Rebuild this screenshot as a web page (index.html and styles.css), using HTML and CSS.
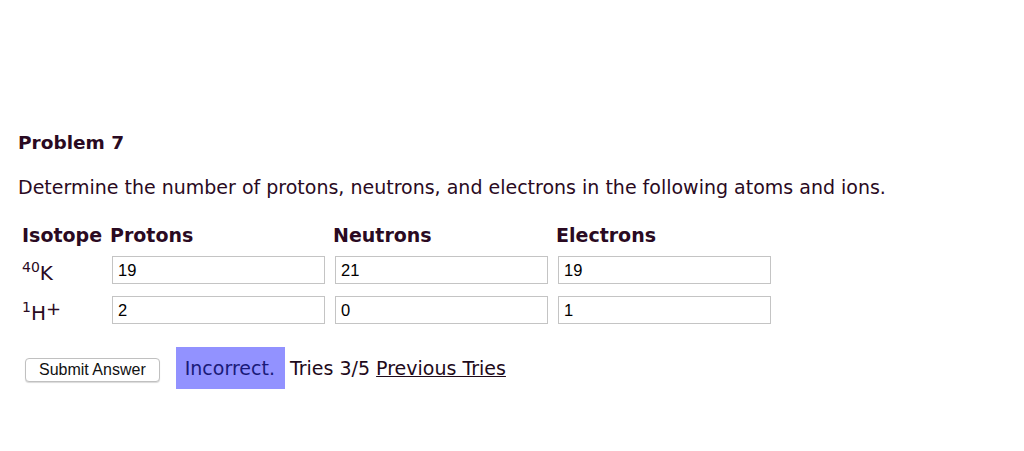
FILE: index.html
```html
<!DOCTYPE html>
<html lang="en">
<head>
    <meta charset="UTF-8">
    <title>Problem 7</title>
    <link rel="stylesheet" href="styles.css">
</head>
<body>
    <div class="problem">
        <h2>Problem 7</h2>
        <p class="question">Determine the number of protons, neutrons, and electrons in the following atoms and ions.</p>

        <div class="answer-grid">
            <div class="head">Isotope</div>
            <div class="head">Protons</div>
            <div class="head">Neutrons</div>
            <div class="head">Electrons</div>

            <div class="isotope"><sup>40</sup>K</div>
            <input type="text" value="19">
            <input type="text" value="21">
            <input type="text" value="19">

            <div class="isotope"><sup>1</sup>H<sup class="charge">+</sup></div>
            <input type="text" value="2">
            <input type="text" value="0">
            <input type="text" value="1">
        </div>

        <div class="submit-row">
            <button>Submit Answer</button>
            <span class="feedback">Incorrect.</span>
            <span class="tries">Tries 3/5 <a href="#">Previous Tries</a></span>
        </div>
    </div>
</body>
</html>
```

FILE: styles.css
```css
body {
    margin: 0;
    background: #ffffff;
    color: #2a0a22;
    font-family: "DejaVu Sans", Verdana, sans-serif;
}

.problem {
    padding: 132px 0 0 18px;
}

h2 {
    margin: 0;
    font-size: 18.5px;
    font-weight: bold;
    line-height: 22px;
}

.question {
    margin: 22px 0 0;
    font-size: 19px;
    line-height: 22px;
}

.answer-grid {
    display: grid;
    grid-template-columns: 88px 223px 223px 212px;
    row-gap: 12px;
    margin: 26px 0 0 4px;
    align-items: center;
}

.head {
    font-size: 19px;
    font-weight: bold;
    line-height: 22px;
    margin-bottom: -2px;
}

.isotope {
    font-size: 20px;
    line-height: 22px;
}

.isotope sup {
    font-size: 14px;
    vertical-align: 8px;
}

.isotope sup.charge {
    font-size: 18px;
    vertical-align: 5px;
}

input {
    width: 213px;
    height: 28px;
    box-sizing: border-box;
    margin: 0 0 0 2px;
    padding: 0 5px;
    border: 1px solid #c4c4c4;
    font-family: "Liberation Sans", Arial, sans-serif;
    font-size: 16.5px;
    color: #000000;
}

.submit-row {
    display: flex;
    align-items: center;
    margin: 23px 0 0 7px;
}

button {
    height: 24px;
    margin-top: 3px;
    padding: 0 13px;
    border: 1px solid #c0c0c0;
    border-radius: 4px;
    background: #ffffff;
    box-shadow: 0 1px 1px rgba(0, 0, 0, 0.15);
    font-family: "Liberation Sans", Arial, sans-serif;
    font-size: 16px;
    color: #111111;
}

.feedback {
    margin-left: 16px;
    padding: 10px 10px 10px 9px;
    background: #9292ff;
    color: #1a1a78;
    font-size: 19px;
    line-height: 22px;
}

.tries {
    margin-left: 5px;
    font-size: 19px;
    color: #1e0a1a;
}

.tries a {
    color: #1e0a1a;
}
```
